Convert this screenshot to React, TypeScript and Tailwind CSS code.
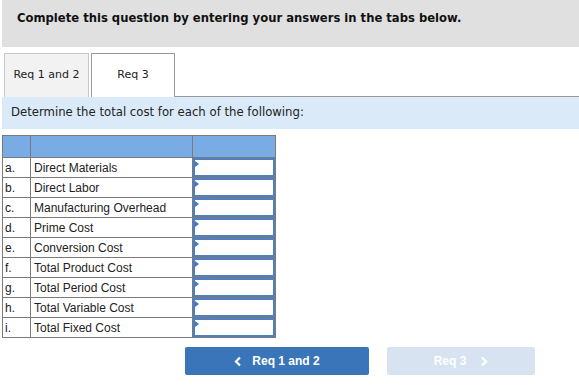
const rows = [
  ["a.", "Direct Materials"],
  ["b.", "Direct Labor"],
  ["c.", "Manufacturing Overhead"],
  ["d.", "Prime Cost"],
  ["e.", "Conversion Cost"],
  ["f.", "Total Product Cost"],
  ["g.", "Total Period Cost"],
  ["h.", "Total Variable Cost"],
  ["i.", "Total Fixed Cost"],
];

const verdana = "font-['Verdana','DejaVu_Sans',sans-serif]";
const arial = "font-['Arial','Liberation_Sans',sans-serif]";

const AnswerCell = () => (
  <td className="p-0 border border-[#7a7a7a] h-[19px]">
    <div className="relative h-[19px] border-2 border-[#4f7fc0] bg-white">
      {/* little flag marking the answer box */}
      <span className="absolute left-0 top-[1px] w-0 h-0 border-y-[3px] border-y-transparent border-l-[4px] border-l-[#3f78c9]" />
    </div>
  </td>
);

const Chevron = ({ dir }: { dir: "left" | "right" }) => (
  <svg width="8" height="11" viewBox="0 0 8 11" className="shrink-0">
    <path
      d={dir === "left" ? "M6 1.5 L2 5.5 L6 9.5" : "M2 1.5 L6 5.5 L2 9.5"}
      fill="none"
      stroke="white"
      strokeWidth="2.2"
    />
  </svg>
);

export default function App() {
  return (
    <div className="w-[579px] h-[392px] bg-white pl-[2px] pt-0">
      {/* Instruction bar */}
      <div className="h-[47px] bg-[#e0e0e0] pl-[15px] pt-[10px]">
        <p className={`${verdana} font-bold text-[11.6px] text-[#111] leading-[16px]`}>
          Complete this question by entering your answers in the tabs below.
        </p>
      </div>

      {/* Tabs */}
      <div className="flex mt-[6px] h-[44px]">
        <div
          className={`${verdana} w-[85px] ml-[2px] flex items-center justify-center bg-[#f2f2f2] border border-[#c8c8c8] border-b-0 text-[11px] text-[#222]`}
        >
          Req 1 and 2
        </div>
        <div
          className={`${verdana} w-[84px] ml-[2px] flex items-center justify-center bg-white border border-[#999] border-b-0 text-[11px] text-[#222]`}
        >
          Req 3
        </div>
        <div className="flex-1 border-b border-[#999]" />
      </div>

      {/* Prompt band */}
      <div className="h-[32px] bg-[#dbeaf8] flex items-center pl-[9px]">
        <p className={`${verdana} text-[11.7px] text-[#222]`}>
          Determine the total cost for each of the following:
        </p>
      </div>

      {/* Answer table */}
      <table className={`${arial} mt-[6px] border-collapse border border-[#7a7a7a] text-[12px] text-[#222]`}>
        <thead>
          <tr className="bg-[#79abe4]">
            <th className="w-[28px] h-[22px] p-0 border border-[#7a7a7a]" />
            <th className="w-[162px] h-[22px] p-0 border border-[#7a7a7a]" />
            <th className="w-[83px] h-[22px] p-0 border border-[#7a7a7a]" />
          </tr>
        </thead>
        <tbody>
          {rows.map(([k, label]) => (
            <tr key={k}>
              <td className="h-[19px] p-0 border border-[#7a7a7a] pl-[2px] leading-[18px]">{k}</td>
              <td className="h-[19px] p-0 border border-[#7a7a7a] pl-[3px] leading-[18px]">{label}</td>
              <AnswerCell />
            </tr>
          ))}
        </tbody>
      </table>

      {/* Navigation */}
      <div className="flex mt-[9px] pl-[183px] gap-[18px]">
        <button
          className={`${arial} w-[184px] h-[28px] rounded-[2px] bg-[#3a75b9] text-white font-bold text-[12px] flex items-center justify-center gap-[10px]`}
        >
          <Chevron dir="left" />
          Req 1 and 2
        </button>
        <button
          className={`${arial} w-[148px] h-[28px] rounded-[2px] bg-[#d7e3f1] text-white font-bold text-[12px] flex items-center justify-center gap-[14px]`}
        >
          Req 3
          <Chevron dir="right" />
        </button>
      </div>
    </div>
  );
}
